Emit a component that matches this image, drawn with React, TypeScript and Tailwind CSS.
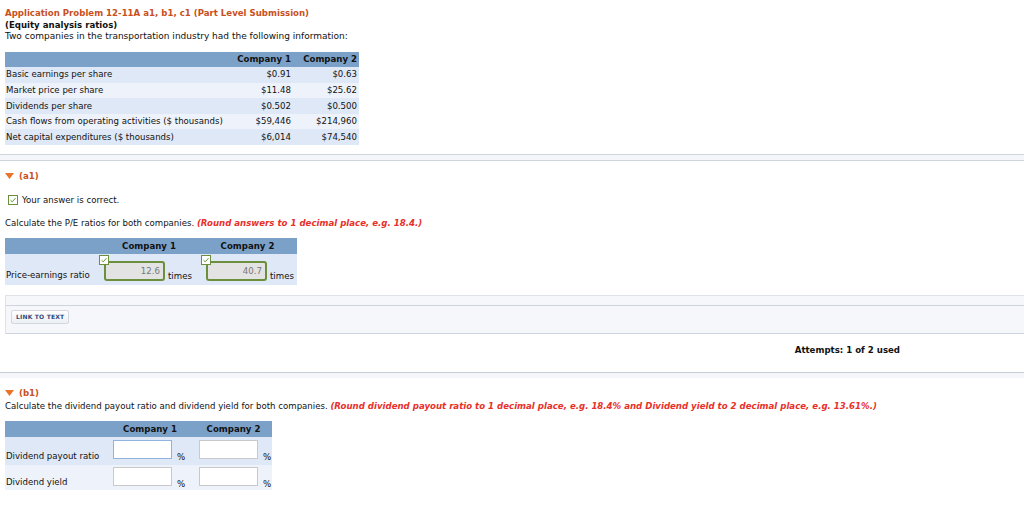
import React from "react";

const font = { fontFamily: '"DejaVu Sans", Verdana, sans-serif' };

const rows = [
    ["Basic earnings per share", "$0.91", "$0.63"],
    ["Market price per share", "$11.48", "$25.62"],
    ["Dividends per share", "$0.502", "$0.500"],
    ["Cash flows from operating activities ($ thousands)", "$59,446", "$214,960"],
    ["Net capital expenditures ($ thousands)", "$6,014", "$74,540"],
];

const CheckBox = ({ className = "" }: { className?: string }) => (
    <svg width="10" height="10" viewBox="0 0 10 10" className={className}>
        <rect x="0.5" y="0.5" width="9" height="9" fill="#fff" stroke="#6b8f3c" />
        <path d="M2.5 5.2 L4.2 6.8 L7.5 3.2" fill="none" stroke="#5e9a3a" strokeWidth="1" />
    </svg>
);

const Caret = () => (
    <svg width="9" height="6" viewBox="0 0 9 6" className="mr-[5px]">
        <path d="M0 0 L9 0 L4.5 6 Z" fill="#e8742c" />
    </svg>
);

const Divider = () => (
    <div className="h-[7px] border-y border-[#cfd5dd] bg-[#f4f6f9]" />
);

const AnswerBox = ({ value }: { value: string }) => (
    <div className="relative flex items-end">
        <CheckBox className="absolute -left-[5px] -top-[6px]" />
        <div className="w-[61px] h-[20px] border-2 border-[#6b8f3c] rounded-[3px] bg-[#e3e3e3] text-right pr-[3px] pt-[2px] text-[#777]">
            {value}
        </div>
        <span className="ml-[3px] mb-[-2px]">times</span>
    </div>
);

const EmptyInput = ({ focus }: { focus?: boolean }) => (
    <div className="flex items-end">
        <div className={`w-[59px] h-[19px] bg-white border ${focus ? "border-[#8fb3dc]" : "border-[#c9c9c9]"}`} />
        <span className="ml-[5px] mb-[-5px]">%</span>
    </div>
);

export default function App() {
    return (
        <div className="w-[1024px] h-[507px] bg-white text-[8.6px] text-[#111] overflow-hidden" style={font}>
            <div className="px-[5px] pt-[7px]">
                <div className="font-bold text-[#c9501c] leading-[12px]">
                    Application Problem 12-11A a1, b1, c1 (Part Level Submission)
                </div>
                <div className="font-bold mt-[1px] leading-[11px]">(Equity analysis ratios)</div>
                <div className="leading-[11px] text-[9px]">Two companies in the transportation industry had the following information:</div>

                <table className="mt-[10px] w-[354px] border-collapse">
                    <thead>
                        <tr className="bg-[#7ba1c9] h-[15px]">
                            <th className="w-[227px]"></th>
                            <th className="text-right font-bold pr-[2px] w-[61px]">Company 1</th>
                            <th className="text-right font-bold pr-[2px]">Company 2</th>
                        </tr>
                    </thead>
                    <tbody>
                        {rows.map((r, i) => (
                            <tr key={r[0]} className={`h-[15.6px] ${i % 2 === 0 ? "bg-[#dfe8f6]" : "bg-[#eef3fb]"}`}>
                                <td className="pl-[1px]">{r[0]}</td>
                                <td className="text-right pr-[2px]">{r[1]}</td>
                                <td className="text-right pr-[2px]">{r[2]}</td>
                            </tr>
                        ))}
                    </tbody>
                </table>
            </div>

            <div className="mt-[9px]">
                <Divider />
            </div>

            <div className="px-[5px]">
                <div className="flex items-center mt-[9px] font-bold text-[#c9501c] leading-[12px]">
                    <Caret />
                    (a1)
                </div>
                <div className="flex items-center mt-[13px] ml-[3px] leading-[11px]">
                    <CheckBox className="mr-[4px]" />
                    Your answer is correct.
                </div>
                <div className="mt-[12px] leading-[11px]">
                    Calculate the P/E ratios for both companies.{" "}
                    <span className="font-bold italic text-[#e8302a]">(Round answers to 1 decimal place, e.g. 18.4.)</span>
                </div>

                <div className="mt-[9px] w-[292px]">
                    <div className="flex h-[16px] items-center bg-[#7ba1c9] font-bold">
                        <div className="w-[95px]" />
                        <div className="w-[98px] text-center">Company 1</div>
                        <div className="flex-1 text-center">Company 2</div>
                    </div>
                    <div className="flex h-[31px] items-end pb-[4px] bg-[#dfe8f6]">
                        <div className="w-[99px] pl-[1px] mb-[-1px]">Price-earnings ratio</div>
                        <div className="w-[102px]">
                            <AnswerBox value="12.6" />
                        </div>
                        <div className="flex-1">
                            <AnswerBox value="40.7" />
                        </div>
                    </div>
                </div>
            </div>

            <div className="mt-[10px] ml-[5px] border-t border-l border-[#dfe3e8] bg-[#f5f7fa]">
                <div className="h-[9px]" />
                <div className="border-t border-b border-[#cdd4de] h-[29px] flex items-start pt-[4px] pl-[5px]">
                    <div className="px-[4px] h-[14px] flex items-center rounded-[2px] border border-[#d3d8df] bg-gradient-to-b from-white to-[#eceff3] text-[6px] font-bold text-[#2b4a7e] tracking-[0.2px]">
                        LINK TO TEXT
                    </div>
                </div>
            </div>

            <div className="flex justify-end pr-[124px] mt-[11px] font-bold leading-[11px]">
                Attempts: 1 of 2 used
            </div>

            <div className="mt-[16px] h-[6px] border-t border-[#c8ced6] bg-[#f4f6f9]" />

            <div className="px-[5px]">
                <div className="flex items-center mt-[9px] font-bold text-[#c9501c] leading-[12px]">
                    <Caret />
                    (b1)
                </div>
                <div className="mt-[2px] leading-[11px]">
                    Calculate the dividend payout ratio and dividend yield for both companies.{" "}
                    <span className="font-bold italic text-[#e8302a]">
                        (Round dividend payout ratio to 1 decimal place, e.g. 18.4% and Dividend yield to 2 decimal place, e.g. 13.61%.)
                    </span>
                </div>

                <div className="mt-[9px] w-[267px]">
                    <div className="flex h-[16px] items-center bg-[#7ba1c9] font-bold">
                        <div className="w-[100px]" />
                        <div className="w-[90px] text-center">Company 1</div>
                        <div className="flex-1 text-center">Company 2</div>
                    </div>
                    <div className="flex h-[28px] items-start pt-[3px] bg-[#dfe8f6]">
                        <div className="w-[108px] pl-[1px] self-end pb-[2px]">Dividend payout ratio</div>
                        <div className="w-[86px]">
                            <EmptyInput focus />
                        </div>
                        <div className="flex-1">
                            <EmptyInput />
                        </div>
                    </div>
                    <div className="flex h-[25px] items-start pt-[2px] bg-[#eef3fb]">
                        <div className="w-[108px] pl-[1px] self-end pb-[1px]">Dividend yield</div>
                        <div className="w-[86px]">
                            <EmptyInput />
                        </div>
                        <div className="flex-1">
                            <EmptyInput />
                        </div>
                    </div>
                </div>
            </div>
        </div>
    );
}
